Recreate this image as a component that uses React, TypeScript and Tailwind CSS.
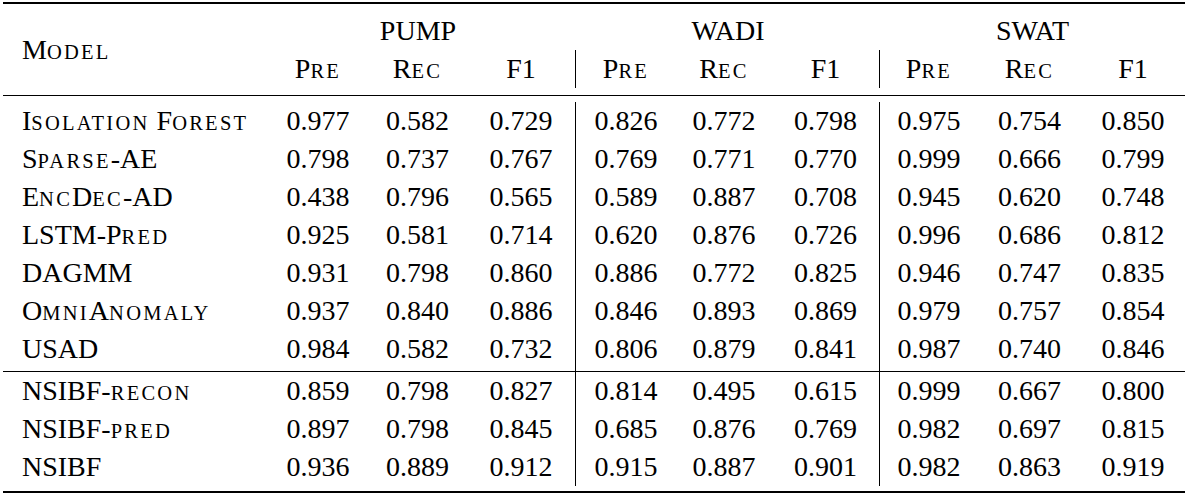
const cols =
  'grid grid-cols-[265px_100px_99px_109px_100px_96px_108px_98px_103px_104px]';

// Small caps: capitals stay full size, lower-case runs are set as smaller, spaced capitals
function SC({ text }: { text: string }) {
  const parts = text.match(/[a-z]+|[^a-z]+/g) ?? [];
  return (
    <>
      {parts.map((p, i) =>
        /[a-z]/.test(p) ? (
          <span key={i} className="uppercase text-[20.5px] tracking-[2.25px]">
            {p}
          </span>
        ) : (
          <span key={i}>{p}</span>
        )
      )}
    </>
  );
}

type Row = { name: string; values: string[] };

const rows: Row[] = [
  { name: 'Isolation Forest', values: ['0.977', '0.582', '0.729', '0.826', '0.772', '0.798', '0.975', '0.754', '0.850'] },
  { name: 'Sparse-AE', values: ['0.798', '0.737', '0.767', '0.769', '0.771', '0.770', '0.999', '0.666', '0.799'] },
  { name: 'EncDec-AD', values: ['0.438', '0.796', '0.565', '0.589', '0.887', '0.708', '0.945', '0.620', '0.748'] },
  { name: 'LSTM-Pred', values: ['0.925', '0.581', '0.714', '0.620', '0.876', '0.726', '0.996', '0.686', '0.812'] },
  { name: 'DAGMM', values: ['0.931', '0.798', '0.860', '0.886', '0.772', '0.825', '0.946', '0.747', '0.835'] },
  { name: 'OmniAnomaly', values: ['0.937', '0.840', '0.886', '0.846', '0.893', '0.869', '0.979', '0.757', '0.854'] },
  { name: 'USAD', values: ['0.984', '0.582', '0.732', '0.806', '0.879', '0.841', '0.987', '0.740', '0.846'] },
];

const ours: Row[] = [
  { name: 'NSIBF-recon', values: ['0.859', '0.798', '0.827', '0.814', '0.495', '0.615', '0.999', '0.667', '0.800'] },
  { name: 'NSIBF-pred', values: ['0.897', '0.798', '0.845', '0.685', '0.876', '0.769', '0.982', '0.697', '0.815'] },
  { name: 'NSIBF', values: ['0.936', '0.889', '0.912', '0.915', '0.887', '0.901', '0.982', '0.863', '0.919'] },
];

function Cells({ values }: { values: string[] }) {
  return (
    <>
      {values.map((v, i) => (
        <div
          key={i}
          className={i === 2 || i === 5 ? 'text-center border-r border-black' : 'text-center'}
        >
          {v}
        </div>
      ))}
    </>
  );
}

function DataRow({ row, className = '' }: { row: Row; className?: string }) {
  return (
    <div className={`${cols} h-[38px] leading-[38px] ${className}`}>
      <div className="pl-[19px] whitespace-nowrap">
        <SC text={row.name} />
      </div>
      <Cells values={row.values} />
    </div>
  );
}

export default function App() {
  return (
    <div className="min-h-[498px] bg-white pt-[2px] pl-[3px] text-black font-serif text-[28px]">
      <div className="w-[1182px] font-[family-name:Liberation_Serif,serif]">
        <div className="h-[2px] bg-black" />

        <div className={`${cols} grid-rows-[46px_38px] leading-[38px]`}>
          <div className="row-span-2 pt-[27px] pl-[19px]">
            <SC text="Model" />
          </div>
          <div className="col-span-3 pt-[8px] pr-[8px] text-center">PUMP</div>
          <div className="col-span-3 pt-[8px] text-center">WADI</div>
          <div className="col-span-3 pt-[8px] text-center">SWAT</div>
          {['Pre', 'Rec', 'F1', 'Pre', 'Rec', 'F1', 'Pre', 'Rec', 'F1'].map((h, i) => (
            <div
              key={i}
              className={`text-center ${i === 2 || i === 5 ? 'border-r border-black' : ''}`}
            >
              <SC text={h} />
            </div>
          ))}
        </div>

        <div className="h-[7px]" />
        <div className="h-px bg-black" />
        <div className="h-[6px]" />

        {rows.map((r, i) => (
          <DataRow key={i} row={r} className={i === rows.length - 1 ? 'h-[41px]' : ''} />
        ))}
        {ours.map((r, i) => (
          <DataRow key={i} row={r} className={i === 0 ? 'h-[39px] border-t border-black' : ''} />
        ))}

        <div className="h-[5px]" />
        <div className="h-[2px] bg-black" />
      </div>
    </div>
  );
}
